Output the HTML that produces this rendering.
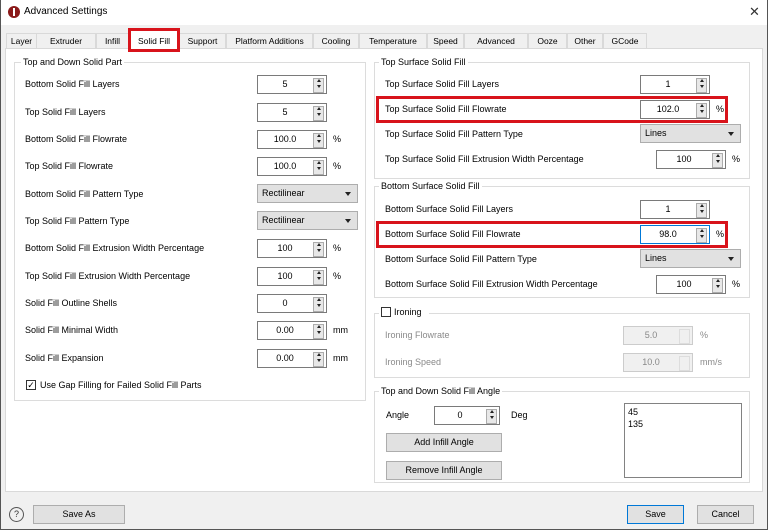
<!DOCTYPE html>
<html><head><meta charset="utf-8"><style>
*{box-sizing:border-box;margin:0;padding:0}
body{width:768px;height:530px;position:relative;overflow:hidden;background:#f0f0f0;font-family:"Liberation Sans",sans-serif;font-size:9px;color:#000}
.a{position:absolute}
.t{position:absolute;white-space:nowrap;line-height:12px}
.g{position:absolute;border:1px solid #dcdcdc}
.gt{position:absolute;top:-7px;left:6px;background:#fff;padding:0 2px;line-height:12px;white-space:nowrap}
.sp{position:absolute;height:19px;border:1px solid #7a7a7a;background:#fff;text-align:center;line-height:17px;padding-right:14px}
.sp:after{content:"";position:absolute;right:2px;top:2px;width:9px;height:13px;border:1px solid #acacac;background:#e8e8e8}
.ar{position:absolute;right:4px;width:0;height:0;border-left:2.5px solid transparent;border-right:2.5px solid transparent;z-index:2}
.up{top:4px;border-bottom:3px solid #222}
.dn{top:10px;border-top:3px solid #222}
.dis{border-color:#ccc;background:#f0f0f0;color:#888}
.dis:after{background:#f0f0f0;border-color:#ddd}
.cb{position:absolute;height:19px;border:1px solid #adadad;background:#e1e1e1;line-height:16px;padding-left:4px}
.cb:after{content:"";position:absolute;right:6px;top:7px;border-left:3.5px solid transparent;border-right:3.5px solid transparent;border-top:4px solid #222}
.btn{position:absolute;height:19px;border:1px solid #adadad;background:#e1e1e1;text-align:center;line-height:17px}
.red{position:absolute;border:3px solid #d8131b}
.tab{position:absolute;top:33px;height:15px;border:1px solid #d9d9d9;border-bottom:none;background:#f0f0f0;text-align:center;line-height:14px;font-size:8.5px;white-space:nowrap}
.gr{color:#8a8a8a}
</style></head><body>
<div class="a" style="left:0;top:0;width:768px;height:25px;background:#fff"></div>
<div class="a" style="left:0;top:0;width:1px;height:530px;background:#555"></div>
<div class="a" style="left:767px;top:0;width:1px;height:530px;background:#555"></div>
<div class="a" style="left:0;top:529px;width:768px;height:1px;background:#555"></div>
<div class="a" style="left:8px;top:6px;width:12px;height:12px;border-radius:50%;background:#8b1a1a"></div>
<div class="a" style="left:13px;top:8px;width:2px;height:8px;background:#fff"></div>
<div class="t" style="left:24px;top:6px;font-size:10px">Advanced Settings</div>
<div class="t" style="left:749px;top:4px;font-size:13px;line-height:16px;color:#333">✕</div>

<div class="tab" style="left:6px;width:31px">Layer</div>
<div class="tab" style="left:36px;width:60px">Extruder</div>
<div class="tab" style="left:96px;width:33px">Infill</div>
<div class="tab" style="left:130px;top:30px;height:19px;width:48px;background:#fff;line-height:20px">Solid Fill</div>
<div class="tab" style="left:179px;width:47px">Support</div>
<div class="tab" style="left:226px;width:87px">Platform Additions</div>
<div class="tab" style="left:313px;width:46px">Cooling</div>
<div class="tab" style="left:359px;width:68px">Temperature</div>
<div class="tab" style="left:427px;width:37px">Speed</div>
<div class="tab" style="left:464px;width:64px">Advanced</div>
<div class="tab" style="left:528px;width:39px">Ooze</div>
<div class="tab" style="left:567px;width:36px">Other</div>
<div class="tab" style="left:603px;width:44px">GCode</div>
<div class="a" style="left:5px;top:48px;width:758px;height:444px;background:#fff;border:1px solid #d9d9d9"></div>
<div class="a" style="left:131px;top:47px;width:46px;height:3px;background:#fff"></div>
<div class="red" style="left:128px;top:28px;width:52px;height:24px"></div>

<div class="g" style="left:14px;top:62px;width:352px;height:339px"><div class="gt">Top and Down Solid Part</div></div>
<div class="t" style="left:25px;top:78px">Bottom Solid Fill Layers</div><div class="sp" style="left:257px;top:75px;width:70px">5</div><i class="ar up" style="left:317px;top:79px"></i><i class="ar dn" style="left:317px;top:85px"></i>
<div class="t" style="left:25px;top:106px">Top Solid Fill Layers</div><div class="sp" style="left:257px;top:103px;width:70px">5</div><i class="ar up" style="left:317px;top:107px"></i><i class="ar dn" style="left:317px;top:113px"></i>
<div class="t" style="left:25px;top:133px">Bottom Solid Fill Flowrate</div><div class="sp" style="left:257px;top:130px;width:70px">100.0</div><i class="ar up" style="left:317px;top:134px"></i><i class="ar dn" style="left:317px;top:140px"></i><div class="t" style="left:333px;top:133px">%</div>
<div class="t" style="left:25px;top:160px">Top Solid Fill Flowrate</div><div class="sp" style="left:257px;top:157px;width:70px">100.0</div><i class="ar up" style="left:317px;top:161px"></i><i class="ar dn" style="left:317px;top:167px"></i><div class="t" style="left:333px;top:160px">%</div>
<div class="t" style="left:25px;top:188px">Bottom Solid Fill Pattern Type</div><div class="cb" style="left:257px;top:184px;width:101px">Rectilinear</div>
<div class="t" style="left:25px;top:215px">Top Solid Fill Pattern Type</div><div class="cb" style="left:257px;top:211px;width:101px">Rectilinear</div>
<div class="t" style="left:25px;top:242px">Bottom Solid Fill Extrusion Width Percentage</div><div class="sp" style="left:257px;top:239px;width:70px">100</div><i class="ar up" style="left:317px;top:243px"></i><i class="ar dn" style="left:317px;top:249px"></i><div class="t" style="left:333px;top:242px">%</div>
<div class="t" style="left:25px;top:270px">Top Solid Fill Extrusion Width Percentage</div><div class="sp" style="left:257px;top:267px;width:70px">100</div><i class="ar up" style="left:317px;top:271px"></i><i class="ar dn" style="left:317px;top:277px"></i><div class="t" style="left:333px;top:270px">%</div>
<div class="t" style="left:25px;top:297px">Solid Fill Outline Shells</div><div class="sp" style="left:257px;top:294px;width:70px">0</div><i class="ar up" style="left:317px;top:298px"></i><i class="ar dn" style="left:317px;top:304px"></i>
<div class="t" style="left:25px;top:324px">Solid Fill Minimal Width</div><div class="sp" style="left:257px;top:321px;width:70px">0.00</div><i class="ar up" style="left:317px;top:325px"></i><i class="ar dn" style="left:317px;top:331px"></i><div class="t" style="left:333px;top:324px">mm</div>
<div class="t" style="left:25px;top:352px">Solid Fill Expansion</div><div class="sp" style="left:257px;top:349px;width:70px">0.00</div><i class="ar up" style="left:317px;top:353px"></i><i class="ar dn" style="left:317px;top:359px"></i><div class="t" style="left:333px;top:352px">mm</div>
<div class="a" style="left:26px;top:380px;width:10px;height:10px;border:1px solid #333;background:#fff;font-size:9px;line-height:8px;text-align:center">✓</div>
<div class="t" style="left:40px;top:379px">Use Gap Filling for Failed Solid Fill Parts</div>

<div class="g" style="left:374px;top:62px;width:376px;height:117px"><div class="gt" style="left:4px">Top Surface Solid Fill</div></div>
<div class="t" style="left:385px;top:78px">Top Surface Solid Fill Layers</div><div class="sp" style="left:640px;top:75px;width:70px">1</div><i class="ar up" style="left:700px;top:79px"></i><i class="ar dn" style="left:700px;top:85px"></i>
<div class="t" style="left:385px;top:103px">Top Surface Solid Fill Flowrate</div><div class="sp" style="left:640px;top:100px;width:70px">102.0</div><i class="ar up" style="left:700px;top:104px"></i><i class="ar dn" style="left:700px;top:110px"></i><div class="t" style="left:716px;top:103px">%</div>
<div class="red" style="left:376px;top:96px;width:352px;height:27px"></div>
<div class="t" style="left:385px;top:128px">Top Surface Solid Fill Pattern Type</div><div class="cb" style="left:640px;top:124px;width:101px">Lines</div>
<div class="t" style="left:385px;top:153px">Top Surface Solid Fill Extrusion Width Percentage</div><div class="sp" style="left:656px;top:150px;width:70px">100</div><i class="ar up" style="left:716px;top:154px"></i><i class="ar dn" style="left:716px;top:160px"></i><div class="t" style="left:732px;top:153px">%</div>

<div class="g" style="left:374px;top:186px;width:376px;height:112px"><div class="gt" style="left:4px">Bottom Surface Solid Fill</div></div>
<div class="t" style="left:385px;top:203px">Bottom Surface Solid Fill Layers</div><div class="sp" style="left:640px;top:200px;width:70px">1</div><i class="ar up" style="left:700px;top:204px"></i><i class="ar dn" style="left:700px;top:210px"></i>
<div class="t" style="left:385px;top:228px">Bottom Surface Solid Fill Flowrate</div><div class="sp" style="left:640px;top:225px;width:70px;border-color:#0078d7">98.0</div><i class="ar up" style="left:700px;top:229px"></i><i class="ar dn" style="left:700px;top:235px"></i><div class="t" style="left:716px;top:228px">%</div>
<div class="red" style="left:376px;top:221px;width:352px;height:27px"></div>
<div class="t" style="left:385px;top:253px">Bottom Surface Solid Fill Pattern Type</div><div class="cb" style="left:640px;top:249px;width:101px">Lines</div>
<div class="t" style="left:385px;top:278px">Bottom Surface Solid Fill Extrusion Width Percentage</div><div class="sp" style="left:656px;top:275px;width:70px">100</div><i class="ar up" style="left:716px;top:279px"></i><i class="ar dn" style="left:716px;top:285px"></i><div class="t" style="left:732px;top:278px">%</div>

<div class="g" style="left:374px;top:313px;width:376px;height:65px"></div>
<div class="a" style="left:379px;top:306px;width:50px;height:12px;background:#fff"></div>
<div class="a" style="left:381px;top:307px;width:10px;height:10px;border:1px solid #333;background:#fff"></div>
<div class="t" style="left:394px;top:306px">Ironing</div>
<div class="t gr" style="left:385px;top:329px">Ironing Flowrate</div><div class="sp dis" style="left:623px;top:326px;width:70px">5.0</div><div class="t gr" style="left:700px;top:329px">%</div>
<div class="t gr" style="left:385px;top:356px">Ironing Speed</div><div class="sp dis" style="left:623px;top:353px;width:70px">10.0</div><div class="t gr" style="left:700px;top:356px">mm/s</div>

<div class="g" style="left:374px;top:391px;width:376px;height:92px"><div class="gt" style="left:4px">Top and Down Solid Fill Angle</div></div>
<div class="t" style="left:386px;top:409px">Angle</div><div class="sp" style="left:434px;top:406px;width:66px">0</div><i class="ar up" style="left:490px;top:410px"></i><i class="ar dn" style="left:490px;top:416px"></i><div class="t" style="left:511px;top:409px">Deg</div>
<div class="btn" style="left:386px;top:433px;width:116px">Add Infill Angle</div>
<div class="btn" style="left:386px;top:461px;width:116px">Remove Infill Angle</div>
<div class="a" style="left:624px;top:403px;width:118px;height:75px;border:1px solid #828282;background:#fff;padding:2px 3px;line-height:12px">45<br>135</div>

<div class="a" style="left:9px;top:507px;width:15px;height:15px;border:1px solid #555;border-radius:50%;text-align:center;line-height:13px;font-size:9px;color:#333">?</div>
<div class="btn" style="left:33px;top:505px;width:92px">Save As</div>
<div class="btn" style="left:627px;top:505px;width:57px;border-color:#0078d7">Save</div>
<div class="btn" style="left:697px;top:505px;width:57px">Cancel</div>
</body></html>
